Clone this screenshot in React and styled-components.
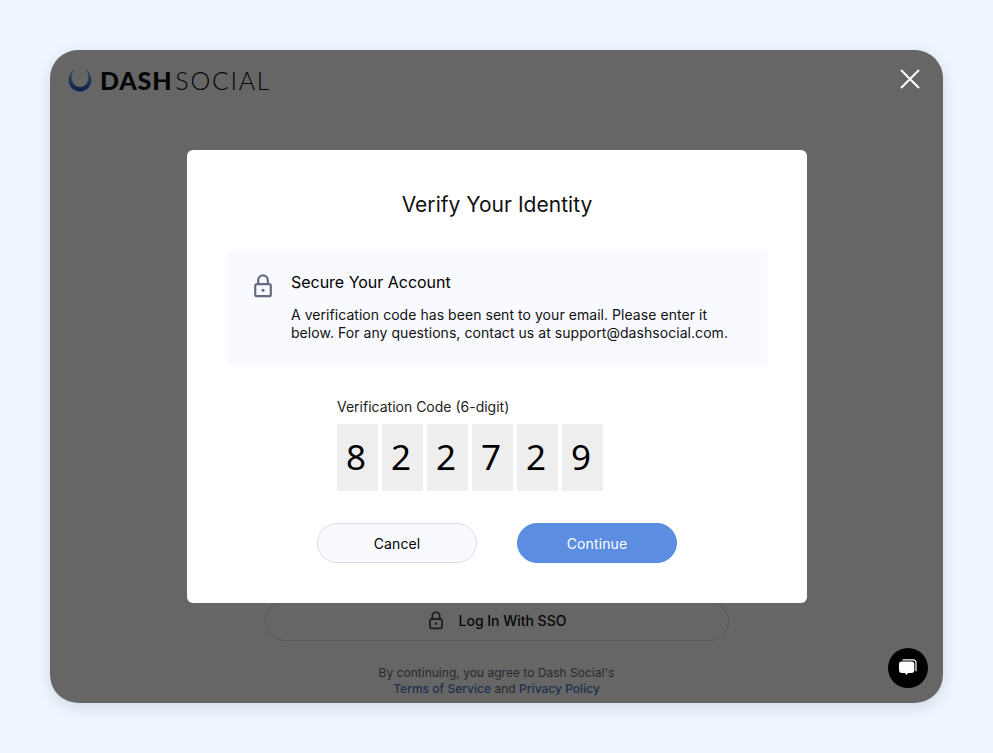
import React from 'react';
import styled, { createGlobalStyle } from 'styled-components';

const Global = createGlobalStyle`
  html, body { margin: 0; padding: 0; background: #eff6ff; }
  * { box-sizing: border-box; }
  body { font-family: Inter, "Liberation Sans", sans-serif; }
`;
const Page = styled.div`
  width: 993px; height: 753px; padding: 50px; display: flex;
`;
const Card = styled.main`
  position: relative; width: 893px; height: 653px; border-radius: 28px; overflow: hidden;
  background: #fff; box-shadow: 0 4px 16px rgba(0,0,0,.12);
  display: flex; flex-direction: column; align-items: center;
`;
const Header = styled.header`
  width: 100%; height: 60px; padding: 0 18px; display: flex; align-items: center; gap: 8px;
`;
const Wordmark = styled.div`
  display: flex; gap: 3px; font-family: Lato, Inter, sans-serif; font-size: 25px; line-height: 24px; color: #0e0e10;
`;
const Dash = styled.span`font-weight: 900; letter-spacing: 0.8px;`;
const Social = styled.span`font-weight: 300; letter-spacing: 1.7px;`;
const SsoButton = styled.button`
  margin-top: 491px; width: 464px; height: 40px; flex: none; border-radius: 20px; border: 1px solid #d9dbe0; background: #fff;
  display: flex; align-items: center; justify-content: center; gap: 16px;
  font: 500 14px/17px Inter, sans-serif; color: #111; padding: 0 0 1px 2px; letter-spacing: -0.02px;
`;
const Terms = styled.p`
  margin: 24px 0 0; font-size: 12px; line-height: 16px; text-align: center; color: #666a75; letter-spacing: 0.02px;
`;
const TermsLink = styled.a`color: #4a76c4; font-weight: 500;`;
const Overlay = styled.div`
  position: absolute; inset: 0; background: rgba(0,0,0,.6);
`;
const CloseButton = styled.button`
  position: absolute; top: 18px; right: 22px; width: 22px; height: 22px; padding: 0; border: 0; background: none;
  display: flex; color: #fff;
`;
const ChatButton = styled.button`
  position: absolute; right: 15px; bottom: 15px; width: 40px; height: 40px; border-radius: 50%; border: 0; padding: 0;
  background: #000; display: flex; align-items: center; justify-content: center;
`;
const Modal = styled.section`
  position: absolute; left: 137px; top: 100px; width: 620px; height: 453px; background: #fff; border-radius: 6px;
  padding: 41px 40px 0; display: flex; flex-direction: column; align-items: center;
`;
const Title = styled.h1`
  margin: 0; font-size: 21px; line-height: 28px; font-weight: 400; color: #111; letter-spacing: 0.03px;
`;
const Banner = styled.div`
  margin-top: 31px; width: 540px; height: 116px; background: #f9faff; border-radius: 4px; padding: 22px 27px;
  display: flex; gap: 19px;
`;
const BannerIcon = styled.span`
  display: flex; flex: none; height: 24px; margin-top: 2px;
`;
const BannerText = styled.div`display: flex; flex-direction: column;`;
const BannerTitle = styled.h2`
  margin: 0; font-size: 16px; line-height: 20px; font-weight: 400; color: #000; letter-spacing: -0.02px;
`;
const BannerBody = styled.p`
  margin: 14px 0 0; font-size: 14px; line-height: 18px; color: #111; letter-spacing: 0.05px; white-space: nowrap;
`;
const CodeBlock = styled.div`
  margin-top: 32px; width: 320px; display: flex; flex-direction: column; gap: 8px;
`;
const CodeLabel = styled.label`
  font-size: 14px; line-height: 18px; color: #222;
`;
const CodeRow = styled.div`display: flex; gap: 4px;`;
const Digit = styled.input`
  width: 41px; height: 67px; border: 0; padding: 0 3px 2px 0; background: #eee; text-align: center;
  font-family: "Noto Sans", sans-serif; font-size: 35px; color: #000; outline: none; border-radius: 0;
`;
const Actions = styled.div`
  margin-top: 32px; display: flex; gap: 40px;
`;
const Button = styled.button`
  width: 160px; height: 40px; border-radius: 20px; font: 400 14px Inter, sans-serif; padding: 0; letter-spacing: 0.1px;
  border: 1px solid ${p => (p.$primary ? '#5b8de0' : '#dcdde2')};
  background: ${p => (p.$primary ? '#5b8de0' : '#f9faff')};
  color: ${p => (p.$primary ? '#fff' : '#000')};
`;

const LockIcon = ({ size = 18, height = 24, color = '#666a80' }) => (
  <svg width={size} height={height} viewBox="0 0 18 24" fill="none" style={{ flex: 'none' }}>
    <rect x="1.2" y="10.2" width="15.6" height="12" rx="1.8" stroke={color} strokeWidth="2.2" />
    <path d="M4.2 10V6.2a4.8 4.8 0 0 1 9.6 0V10" stroke={color} strokeWidth="2.2" />
    <circle cx="9" cy="16.2" r="1.5" fill={color} />
  </svg>
);

const LogoMark = () => (
  <svg width="24" height="24" viewBox="0 0 24 24" style={{ flex: 'none' }}>
    <defs>
      <linearGradient id="crescent" x1="0" y1="0" x2="0" y2="1">
        <stop offset="0" stopColor="#9db6e2" />
        <stop offset="0.55" stopColor="#5e86d2" />
        <stop offset="1" stopColor="#1f4fb0" />
      </linearGradient>
    </defs>
    <path
      d="M7 1.2C2.9 3 .5 7 .5 12c0 6.2 5 11.4 11.5 11.4S23.5 18.200 23.500 12C23.500 7 21 3 17 1.200C19.500 3.500 20.800 7 20.300 10.500C19.700 15.600 16 19 12 19S4.300 15.600 3.700 10.500C3.200 7 4.500 3.500 7 1.200Z"
      fill="url(#crescent)"
    />
  </svg>
);

export default function App() {
  return (
    <Page>
      <Global />
      <Card>
        <Header>
          <LogoMark />
          <Wordmark>
            <Dash>DASH</Dash>
            <Social>SOCIAL</Social>
          </Wordmark>
        </Header>
        <SsoButton>
          <LockIcon size={14} height={19} color="#3f4250" />
          Log In With SSO
        </SsoButton>
        <Terms>
          By continuing, you agree to Dash Social's
          <br />
          <TermsLink>Terms of Service</TermsLink> and <TermsLink>Privacy Policy</TermsLink>
        </Terms>
        <Overlay />
        <CloseButton aria-label="Close">
          <svg width="22" height="22" viewBox="0 0 22 22" fill="none">
            <path d="M2 2l18 18M20 2L2 20" stroke="currentColor" strokeWidth="2" />
          </svg>
        </CloseButton>
        <ChatButton aria-label="Chat">
          <svg width="22" height="22" viewBox="0 0 22 22" fill="none">
            <path d="M6 2.800h10a3 3 0 0 1 3 3v8" stroke="#fff" strokeWidth="1.200" strokeLinecap="round" />
            <path
              d="M4.800 4.500h10a2.500 2.500 0 0 1 2.500 2.500v6a3 3 0 0 1-3 3h-3.300l-1.500 2-1.500-2H5a3 3 0 0 1-3-3V7.300a2.800 2.800 0 0 1 2.800-2.800Z"
              fill="#fff"
            />
          </svg>
        </ChatButton>
        <Modal>
          <Title>Verify Your Identity</Title>
          <Banner>
            <BannerIcon>
              <LockIcon />
            </BannerIcon>
            <BannerText>
              <BannerTitle>Secure Your Account</BannerTitle>
              <BannerBody>
                A verification code has been sent to your email. Please enter it
                <br />
                below. For any questions, contact us at support@dashsocial.com.
              </BannerBody>
            </BannerText>
          </Banner>
          <CodeBlock>
            <CodeLabel>Verification Code (6-digit)</CodeLabel>
            <CodeRow>
              {['8', '2', '2', '7', '2', '9'].map((d, i) => (
                <Digit key={i} value={d} readOnly maxLength={1} />
              ))}
            </CodeRow>
          </CodeBlock>
          <Actions>
            <Button>Cancel</Button>
            <Button $primary>Continue</Button>
          </Actions>
        </Modal>
      </Card>
    </Page>
  );
}
